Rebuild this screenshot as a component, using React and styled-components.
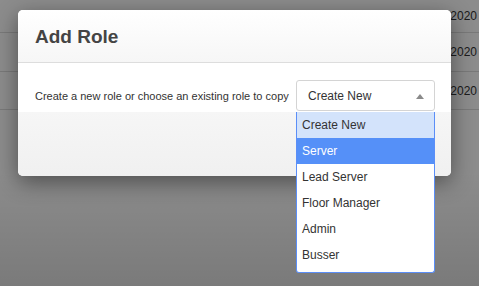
import React from 'react';
import styled, { createGlobalStyle } from 'styled-components';

const GlobalStyle = createGlobalStyle`
  html, body { margin: 0; padding: 0; }
  body {
    font-family: 'Liberation Sans', Arial, sans-serif;
    background: #fff;
    overflow: hidden;
  }
`;

const Page = styled.div`
  position: relative;
  width: 479px;
  height: 286px;
  overflow: hidden;
  background: #fff;
`;

const Table = styled.div`
  display: flex;
  flex-direction: column;
`;

const Row = styled.div`
  height: ${(p) => p.h}px;
  border-bottom: 1px solid #dcdcdc;
  display: flex;
  align-items: center;
  padding: 0 0 0 150px;
  font-size: 12px;
  color: #333;
  box-sizing: border-box;
`;

const RowDate = styled.span`
  margin-left: auto;
  margin-right: 2px;
  white-space: nowrap;
`;

const Overlay = styled.div`
  position: absolute;
  inset: 0;
  background: linear-gradient(rgba(0,0,0,0.45), rgba(0,0,0,0.45) 60%, rgba(0,0,0,0.52));
`;

const Modal = styled.div`
  position: absolute;
  left: 18px;
  top: 10px;
  width: 433px;
  border-radius: 5px;
  overflow: hidden;
  background: #fff;
  box-shadow: 0 6px 22px rgba(0,0,0,0.45);
  display: flex;
  flex-direction: column;
`;

const Header = styled.div`
  height: 53px;
  box-sizing: border-box;
  padding: 2px 17px 0;
  display: flex;
  align-items: center;
  background: linear-gradient(#fff, #f6f6f6);
  border-bottom: 1px solid #dddddd;
`;

const Title = styled.h3`
  margin: 0;
  font-size: 19px;
  font-weight: bold;
  color: #444;
`;

const Body = styled.div`
  display: flex;
  align-items: center;
  justify-content: space-between;
  padding: 17px 16px 1px 17px;
  color: #333;
`;

const Prompt = styled.span`
  white-space: nowrap;
  font-size: 11px;
`;

const Select = styled.div`
  flex: 0 0 139px;
  height: 31px;
  box-sizing: border-box;
  border: 1px solid #d4d4d4;
  border-radius: 3px;
  display: flex;
  align-items: center;
  justify-content: space-between;
  padding: 1px 10px 0 11px;
  color: #333;
  font-size: 12px;
  background: #fff;
`;

const Caret = styled.span`
  width: 0;
  height: 0;
  border-left: 4px solid transparent;
  border-right: 4px solid transparent;
  border-bottom: 5px solid #8a8a8a;
`;

const Footer = styled.div`
  height: 64px;
  background: linear-gradient(#f6f6f6, #f0f0f0);
`;

const Dropdown = styled.ul`
  position: absolute;
  left: 296px;
  top: 112px;
  width: 139px;
  box-sizing: border-box;
  margin: 0;
  padding: 0 0 4px;
  list-style: none;
  background: #fff;
  border: 1px solid #5b8ef7;
  border-top: none;
  border-radius: 0 0 3px 3px;
  font-size: 12px;
`;

const Option = styled.li`
  height: 26px;
  display: flex;
  align-items: center;
  padding-left: 5px;
  color: ${(p) => (p.active ? '#fff' : '#333')};
  background: ${(p) => (p.active ? '#5590f8' : p.selected ? '#d3e3fb' : 'transparent')};
`;

const rows = [
  { h: 33, name: 'Hale Sister', date: ', 2020' },
  { h: 39, name: '', date: ', 2020' },
  { h: 38, name: '', date: ', 2020' },
];

const options = ['Create New', 'Server', 'Lead Server', 'Floor Manager', 'Admin', 'Busser'];

export default function App() {
  return (
    <>
      <GlobalStyle />
      <Page>
        <Table>
          {rows.map((r, i) => (
            <Row key={i} h={r.h}>
              <span>{r.name}</span>
              <RowDate>{r.date}</RowDate>
            </Row>
          ))}
        </Table>
        <Overlay />
        <Modal>
          <Header>
            <Title>Add Role</Title>
          </Header>
          <Body>
            <Prompt>Create a new role or choose an existing role to copy</Prompt>
            <Select>
              <span>Create New</span>
              <Caret />
            </Select>
          </Body>
          <Footer />
        </Modal>
        <Dropdown>
          {options.map((o, i) => (
            <Option key={o} selected={i === 0} active={i === 1}>{o}</Option>
          ))}
        </Dropdown>
      </Page>
    </>
  );
}
